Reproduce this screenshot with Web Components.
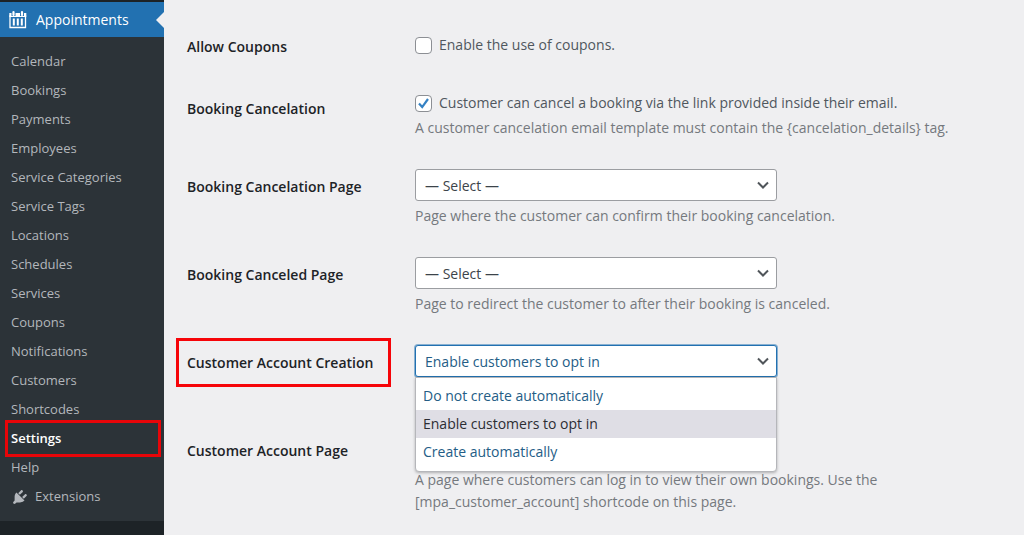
<!DOCTYPE html>
<html lang="en">
<head>
<meta charset="utf-8">
<meta name="viewport" content="width=device-width, initial-scale=1">
<title>Appointments – Settings</title>
<style>
  body { margin: 0; font-family: "Open Sans", "Noto Sans", sans-serif; color: #3c434a; background: #efeff1; }
</style>
</head>
<body>
<admin-app></admin-app>
<script>
const define = (name, html) => {
  const template = document.createElement('template');
  template.innerHTML = html;
  customElements.define(name, class extends HTMLElement {
    constructor() {
      super();
      this.attachShadow({ mode: 'open' }).append(template.content.cloneNode(true));
    }
  });
};

define('menu-item', `
  <style>
    :host { display: block; position: relative; font-size: 13px; line-height: 29px; color: #b3b7bc; padding: 0 11px; }
    :host([current]) { color: #fff; font-weight: 600; }
    :host([current])::after { content: ""; position: absolute; inset: -4px 3px -4px 5px; border: 3px solid #e80509; }
    ::slotted(a) { display: flex; align-items: center; gap: 6px; color: inherit; text-decoration: none; }
  </style>
  <slot></slot>`);

define('admin-menu', `
  <style>
    :host { display: block; background: #1d2327; padding-top: 2px; }
    .top { position: relative; display: flex; align-items: center; gap: 8px; height: 35px; padding: 0 8px; background: #2271b1; color: #fff; font-size: 14px; text-decoration: none; }
    .top::after { content: ""; position: absolute; right: 0; top: 10px; border: 8px solid transparent; border-left: 0; border-right-color: #efeff1; }
    nav { background: #2c3338; padding: 10px 0; }
    svg { flex: none; }
  </style>
  <a class="top" href="#appointments">
    <svg width="20" height="20" viewBox="0 0 20 20" fill="none" stroke="#fff" aria-hidden="true">
      <path d="M2 6h15.500v11.500H2z" stroke-width="1.300"/>
      <path d="M1.300 5h17" stroke-width="4"/>
      <path d="M5.500 1v5M14 1v5" stroke="#2271b1" stroke-width="4"/>
      <path d="M5.500 2v3M14 2v3" stroke-width="2.200" stroke-linecap="round"/>
      <path d="M5.800 8.500v7M9.800 8.500v7M13.800 8.500v7" stroke-width="2"/>
    </svg>
    <span>Appointments</span>
  </a>
  <nav aria-label="Appointments">
    <menu-item><a href="#calendar">Calendar</a></menu-item>
    <menu-item><a href="#bookings">Bookings</a></menu-item>
    <menu-item><a href="#payments">Payments</a></menu-item>
    <menu-item><a href="#employees">Employees</a></menu-item>
    <menu-item><a href="#service-categories">Service Categories</a></menu-item>
    <menu-item><a href="#service-tags">Service Tags</a></menu-item>
    <menu-item><a href="#locations">Locations</a></menu-item>
    <menu-item><a href="#schedules">Schedules</a></menu-item>
    <menu-item><a href="#services">Services</a></menu-item>
    <menu-item><a href="#coupons">Coupons</a></menu-item>
    <menu-item><a href="#notifications">Notifications</a></menu-item>
    <menu-item><a href="#customers">Customers</a></menu-item>
    <menu-item><a href="#shortcodes">Shortcodes</a></menu-item>
    <menu-item current><a href="#settings" aria-current="page">Settings</a></menu-item>
    <menu-item><a href="#help">Help</a></menu-item>
    <menu-item><a href="#extensions">
      <svg width="18" height="18" viewBox="0 0 20 20" fill="currentColor" aria-hidden="true">
        <path d="M13.110 4.360 9.870 7.600 8 5.730l3.240-3.240c.35-.34 1.050-.2 1.560.32.52.51.66 1.210.31 1.550zm-8 1.770.91-1.120 9.010 9.010-1.190.84c-.71.710-2.630 1.160-3.820 1.160H6.140L4.900 17.260c-.59.59-1.540.59-2.120 0-.59-.58-.59-1.530 0-2.120l1.240-1.240v-3.880c0-1.130.4-3.190 1.090-3.890zm7.260 3.970 3.240-3.240c.34-.35 1.040-.21 1.550.31.52.51.66 1.210.31 1.550l-3.240 3.250z"/>
      </svg>Extensions</a></menu-item>
  </nav>`);

define('setting-row', `
  <style>
    :host { display: grid; grid-template-columns: 228px minmax(0, 1fr); align-items: start; }
    .head { position: relative; padding-top: 8px; line-height: 20px; font-size: 14px; font-weight: 600; color: #1d2327; }
    :host([marked]) .head::before { content: ""; position: absolute; inset: -7px 24px -14px -11px; border: 3px solid #f60409; }
    .field { position: relative; min-height: 32px; max-width: 560px; }
    :host([tall]) .field { min-height: 58px; }
    :host([single]) .field { display: flex; align-items: center; }
  </style>
  <div class="head"><slot name="label"></slot></div>
  <div class="field"><slot></slot></div>`);

define('option-list', `
  <style>
    :host { display: block; position: absolute; z-index: 1; top: 32px; left: 0; width: 362px; background: #fff; border: 1px solid #b5b6ba; border-radius: 0 0 4px 4px; box-shadow: 0 1px 3px #0004; box-sizing: border-box; padding: 4px 0 5px; }
    ::slotted(div) { line-height: 28px; padding: 0 7px; color: #245d86; font-size: 14px; }
    ::slotted([aria-selected="true"]) { background: #dfdee5; color: #2c2d33; }
  </style>
  <slot></slot>`);

define('settings-form', `
  <style>
    :host { display: block; }
    form { display: flex; flex-direction: column; gap: 30px; padding: 29px 23px 24px; }
    .check { display: flex; align-items: center; gap: 7px; line-height: 24px; font-size: 14px; color: #50575e; }
    input { appearance: none; box-sizing: border-box; width: 17px; height: 17px; margin: 0; border: 1px solid #8c8f94; border-radius: 4px; background: #fff center / 15px no-repeat; }
    input:checked { background-image: url("data:image/svg+xml,%3Csvg xmlns='http://www.w3.org/2000/svg' viewBox='0 0 15 15' fill='none' stroke='%233582c4' stroke-width='2.2'%3E%3Cpath d='M3 7.500l3.200 3.600L12 3'/%3E%3C/svg%3E"); }
    p { margin: 4px 0 0; font-size: 14px; line-height: 22px; color: #75797e; }
    .check + p { margin-top: 2px; }
    select { appearance: none; display: block; box-sizing: border-box; width: 362px; max-width: 100%; height: 32px; margin: 0; padding: 0 28px 0 9px; border: 1px solid #9b9da1; border-radius: 3px; color: #3c434a; font: 14px "Open Sans", "Noto Sans", sans-serif; outline: 0;
      background: #fff url("data:image/svg+xml,%3Csvg xmlns='http://www.w3.org/2000/svg' viewBox='0 0 16 16' fill='none' stroke='%2350555a' stroke-width='2'%3E%3Cpath d='M3 5.500l5 5 5-5'/%3E%3C/svg%3E") right 5px center / 16px no-repeat; }
    select.open { border-color: #2271b1; box-shadow: 0 0 0 1px #2271b180; color: #245d86; }
  </style>
  <form>
    <setting-row single>
      <span slot="label">Allow Coupons</span>
      <label class="check"><input type="checkbox">Enable the use of coupons.</label>
    </setting-row>
    <setting-row>
      <span slot="label">Booking Cancelation</span>
      <label class="check"><input type="checkbox" checked>Customer can cancel a booking via the link provided inside their email.</label>
      <p>A customer cancelation email template must contain the {cancelation_details} tag.</p>
    </setting-row>
    <setting-row>
      <label slot="label" for="cancelation-page">Booking Cancelation Page</label>
      <select id="cancelation-page"><option>— Select —</option></select>
      <p>Page where the customer can confirm their booking cancelation.</p>
    </setting-row>
    <setting-row>
      <label slot="label" for="canceled-page">Booking Canceled Page</label>
      <select id="canceled-page"><option>— Select —</option></select>
      <p>Page to redirect the customer to after their booking is canceled.</p>
    </setting-row>
    <setting-row marked tall>
      <label slot="label" for="account-creation">Customer Account Creation</label>
      <select id="account-creation" class="open">
        <option>Do not create automatically</option>
        <option selected>Enable customers to opt in</option>
        <option>Create automatically</option>
      </select>
      <option-list role="listbox" aria-label="Customer Account Creation">
        <div role="option" aria-selected="false">Do not create automatically</div>
        <div role="option" aria-selected="true">Enable customers to opt in</div>
        <div role="option" aria-selected="false">Create automatically</div>
      </option-list>
    </setting-row>
    <setting-row>
      <label slot="label" for="account-page">Customer Account Page</label>
      <select id="account-page"><option></option></select>
      <p>A page where customers can log in to view their own bookings. Use the [mpa_customer_account] shortcode on this page.</p>
    </setting-row>
  </form>`);

define('admin-app', `
  <style>
    :host { display: grid; grid-template-columns: 164px minmax(0, 1fr); min-height: 100vh; }
  </style>
  <admin-menu></admin-menu>
  <main><settings-form></settings-form></main>`);
</script>
</body>
</html>
